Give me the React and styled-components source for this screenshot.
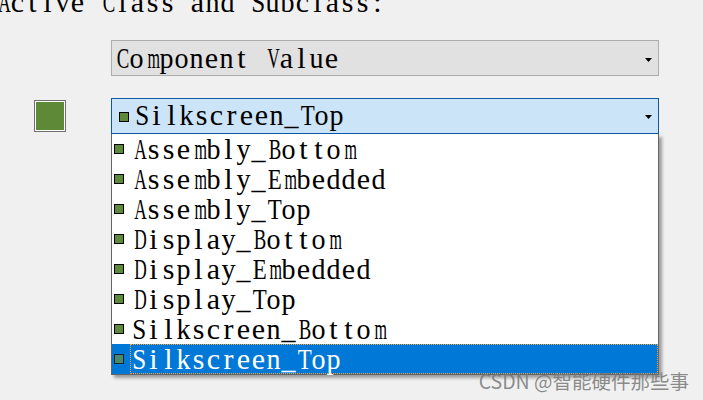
import React from "react";
import styled, { createGlobalStyle } from "styled-components";

const Global = createGlobalStyle`
  html, body {
    margin: 0;
    padding: 0;
    background: #f0f0f0;
    overflow: hidden;
  }
  body {
    width: 703px;
    height: 400px;
  }
`;

// advance widths (em) of Liberation Serif, used to fit each glyph
// into a 15px half-width cell like the SimSun UI font in the screenshot
const widths = {
  A: 0.722, B: 0.667, C: 0.667, D: 0.722, E: 0.611, S: 0.556, T: 0.611, V: 0.722,
  a: 0.444, b: 0.5, c: 0.444, d: 0.5, e: 0.444, i: 0.278, k: 0.5, l: 0.278,
  m: 0.778, n: 0.5, o: 0.5, p: 0.5, r: 0.333, s: 0.389, t: 0.278, u: 0.5,
  v: 0.5, y: 0.5, _: 0.5, ":": 0.278,
};

const FONT_PX = 30;
const CELL = 15;

const Page = styled.div`
  position: relative;
  width: 703px;
  height: 400px;
  display: flex;
  flex-direction: column;
  font-family: "Liberation Serif", "DejaVu Serif", serif;
  font-size: ${FONT_PX}px;
  color: #000;
`;

const Cell = styled.span.attrs((p) => ({
  style: p.$scale < 1 ? { transform: `scaleX(${p.$scale})` } : undefined,
}))`
  display: inline-block;
  width: ${CELL}px;
  text-align: center;
`;

function Mono({ text }) {
  return (
    <span>
      {text.split("").map((ch, i) => {
        const w = (widths[ch] || 0.5) * FONT_PX;
        const room = w > 20 ? CELL - 2.5 : CELL - 1;
        const scale = Math.min(1, room / w);
        return (
          <Cell key={i} $scale={scale}>
            {ch === " " ? "\u00a0" : ch}
          </Cell>
        );
      })}
    </span>
  );
}

const Title = styled.div`
  margin: -13px 0 0 -5px;
  height: 30px;
  line-height: 30px;
  white-space: nowrap;
`;

const Row = styled.div`
  display: flex;
  align-items: center;
  margin-top: ${(p) => p.$top}px;
`;

const Swatch = styled.div`
  box-sizing: border-box;
  width: 32px;
  height: 32px;
  margin-left: 34px;
  margin-right: 45px;
  border: 1px solid #6e6e6e;
  box-shadow: inset 0 0 0 1px #ffffff;
  background: #5e8a38;
`;

const ComboWrap = styled.div`
  position: relative;
  margin-left: ${(p) => p.$left}px;
`;

const Combo = styled.div`
  box-sizing: border-box;
  width: 548px;
  height: 36px;
  display: flex;
  align-items: flex-start;
  padding: ${(p) => p.$padTop}px 0 0 ${(p) => p.$padLeft}px;
  border: 1px solid ${(p) => (p.$open ? "#0b5aa8" : "#adadad")};
  background: ${(p) => (p.$open ? "#cce4f7" : "#e1e1e1")};
  line-height: 30px;
  white-space: nowrap;
`;

const ComboText = styled.span`
  flex: 1;
  margin-left: ${(p) => p.$gap || 0}px;
`;

const Arrow = styled.svg`
  width: 7px;
  height: 4px;
  margin: ${(p) => p.$arrowTop}px 6px 0 0;
  flex-shrink: 0;
`;

const Layer = styled.span`
  box-sizing: border-box;
  display: inline-block;
  width: 10px;
  height: 10px;
  margin-top: ${(p) => p.$top || 0}px;
  border: 1px solid ${(p) => (p.$selected ? "#0c2233" : "#000")};
  background: ${(p) => (p.$selected ? "#4a8a6a" : "#5e8a38")};
  flex-shrink: 0;
`;

const List = styled.div`
  position: absolute;
  left: 0;
  top: 100%;
  box-sizing: border-box;
  width: 548px;
  background: #ffffff;
  border: 1px solid #646464;
  border-top: none;
  box-shadow: 3px 3px 3px rgba(0, 0, 0, 0.35);
  display: flex;
  flex-direction: column;
`;

const Item = styled.div`
  display: flex;
  align-items: center;
  height: 30px;
  padding-left: 2px;
  gap: 6px;
  background: ${(p) => (p.$selected ? "#0078d7" : "transparent")};
  color: ${(p) => (p.$selected ? "#ffffff" : "#000000")};
  white-space: nowrap;
`;

const ItemText = styled.span`
  box-sizing: border-box;
  flex: 1;
  height: 30px;
  line-height: 28px;
  border: 1px dotted ${(p) => (p.$focus ? "#f3a33c" : "transparent")};
`;

const Watermark = styled.div`
  position: absolute;
  right: 14px;
  bottom: 8px;
  font-family: "Noto Sans CJK SC", "Noto Sans", sans-serif;
  font-size: 19.5px;
  color: rgba(120, 120, 120, 0.85);
  line-height: 22px;
  white-space: nowrap;
`;

const layers = [
  "Assembly_Bottom",
  "Assembly_Embedded",
  "Assembly_Top",
  "Display_Bottom",
  "Display_Embedded",
  "Display_Top",
  "Silkscreen_Bottom",
  "Silkscreen_Top",
];

function DownArrow({ top }) {
  return (
    <Arrow $arrowTop={top} viewBox="0 0 7 4">
      <path d="M0 0H7L3.5 4Z" fill="#000" />
    </Arrow>
  );
}

export default function App() {
  const current = "Silkscreen_Top";
  return (
    <Page>
      <Global />
      <Title>
        <Mono text="Active Class and Subclass:" />
      </Title>
      <Row $top={23}>
        <ComboWrap $left={111}>
          <Combo $padTop={2} $padLeft={2}>
            <ComboText>
              <Mono text="Component Value" />
            </ComboText>
            <DownArrow top={15} />
          </Combo>
        </ComboWrap>
      </Row>
      <Row $top={22}>
        <Swatch />
        <ComboWrap $left={0}>
          <Combo $open $padTop={1} $padLeft={7}>
            <Layer $top={12} />
            <ComboText $gap={5}>
              <Mono text={current} />
            </ComboText>
            <DownArrow top={15} />
          </Combo>
          <List>
            {layers.map((name) => {
              const sel = name === current;
              return (
                <Item key={name} $selected={sel}>
                  <Layer $selected={sel} />
                  <ItemText $focus={sel}>
                    <Mono text={name} />
                  </ItemText>
                </Item>
              );
            })}
          </List>
        </ComboWrap>
      </Row>
      <Watermark>CSDN @智能硬件那些事</Watermark>
    </Page>
  );
}
